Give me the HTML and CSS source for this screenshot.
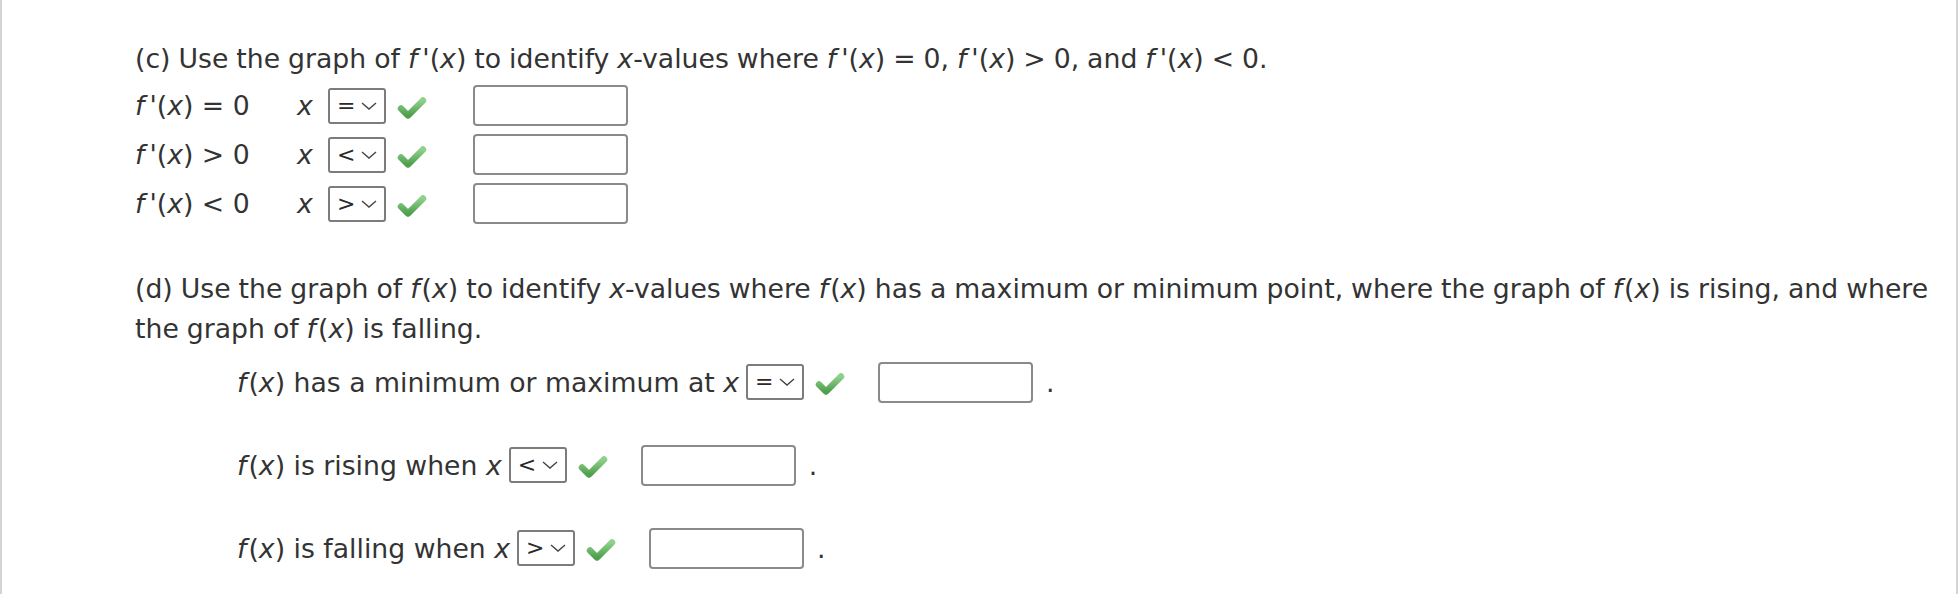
FILE: index.html
```html
<!DOCTYPE html>
<html>
<head>
<meta charset="utf-8">
<link rel="stylesheet" href="styles.css">
</head>
<body>
<svg width="0" height="0" class="defs">
  <defs>
    <linearGradient id="chk" x1="0" y1="0" x2="0" y2="1">
      <stop offset="0" stop-color="#8fd18c"/>
      <stop offset="1" stop-color="#4f9f4c"/>
    </linearGradient>
  </defs>
</svg>
<div class="page">
  <div class="content">
    <p class="question">(c) Use the graph of <i>f</i><span class="pr">'</span>(<i>x</i>) to identify <i>x</i>-values where <i>f</i><span class="pr">'</span>(<i>x</i>) = 0, <i>f</i><span class="pr">'</span>(<i>x</i>) &gt; 0, and <i>f</i><span class="pr">'</span>(<i>x</i>) &lt; 0.</p>
    <div class="grid-c">
      <span class="lbl"><i>f</i><span class="pr">'</span>(<i>x</i>) = 0</span>
      <i class="var">x</i>
      <span class="sel"><span class="sym">=</span><svg class="chev" viewBox="0 0 16 8"><path d="M1 1 L8 7 L15 1"/></svg></span>
      <svg class="check" viewBox="0 0 30 24"><path d="M4 12.5 L11 19.5 L26 4.5"/></svg>
      <span class="inp"></span>

      <span class="lbl"><i>f</i><span class="pr">'</span>(<i>x</i>) &gt; 0</span>
      <i class="var">x</i>
      <span class="sel"><span class="sym">&lt;</span><svg class="chev" viewBox="0 0 16 8"><path d="M1 1 L8 7 L15 1"/></svg></span>
      <svg class="check" viewBox="0 0 30 24"><path d="M4 12.5 L11 19.5 L26 4.5"/></svg>
      <span class="inp"></span>

      <span class="lbl"><i>f</i><span class="pr">'</span>(<i>x</i>) &lt; 0</span>
      <i class="var">x</i>
      <span class="sel"><span class="sym">&gt;</span><svg class="chev" viewBox="0 0 16 8"><path d="M1 1 L8 7 L15 1"/></svg></span>
      <svg class="check" viewBox="0 0 30 24"><path d="M4 12.5 L11 19.5 L26 4.5"/></svg>
      <span class="inp"></span>
    </div>

    <p class="question q-d">(d) Use the graph of <i class="fn">f</i>(<i>x</i>) to identify <i>x</i>-values where <i class="fn">f</i>(<i>x</i>) has a maximum or minimum point, where the graph of <i class="fn">f</i>(<i>x</i>) is rising, and where the graph of <i class="fn">f</i>(<i>x</i>) is falling.</p>

    <div class="rows-d">
      <div class="row-d">
        <span class="txt"><i class="fn">f</i>(<i>x</i>) has a minimum or maximum at <i>x</i></span>
        <span class="sel"><span class="sym">=</span><svg class="chev" viewBox="0 0 16 8"><path d="M1 1 L8 7 L15 1"/></svg></span>
        <svg class="check" viewBox="0 0 30 24"><path d="M4 12.5 L11 19.5 L26 4.5"/></svg>
        <span class="inp"></span>
        <span class="dot">.</span>
      </div>
      <div class="row-d">
        <span class="txt"><i class="fn">f</i>(<i>x</i>) is rising when <i>x</i></span>
        <span class="sel"><span class="sym">&lt;</span><svg class="chev" viewBox="0 0 16 8"><path d="M1 1 L8 7 L15 1"/></svg></span>
        <svg class="check" viewBox="0 0 30 24"><path d="M4 12.5 L11 19.5 L26 4.5"/></svg>
        <span class="inp"></span>
        <span class="dot">.</span>
      </div>
      <div class="row-d">
        <span class="txt"><i class="fn">f</i>(<i>x</i>) is falling when <i>x</i></span>
        <span class="sel"><span class="sym">&gt;</span><svg class="chev" viewBox="0 0 16 8"><path d="M1 1 L8 7 L15 1"/></svg></span>
        <svg class="check" viewBox="0 0 30 24"><path d="M4 12.5 L11 19.5 L26 4.5"/></svg>
        <span class="inp"></span>
        <span class="dot">.</span>
      </div>
    </div>
  </div>
</div>
</body>
</html>
```

FILE: styles.css
```css
html, body {
  margin: 0;
  padding: 0;
  background: #ffffff;
}
.defs {
  position: absolute;
}
.page {
  width: 1954px;
  height: 594px;
  border-left: 2px solid #d4d4d4;
  border-right: 2px solid #d4d4d4;
  overflow: hidden;
  font-family: "DejaVu Sans", Verdana, sans-serif;
  font-size: 26.7px;
  color: #333333;
}
.content {
  padding: 44px 0 0 133px;
  width: 1808px;
}
.question {
  margin: 0;
  line-height: 30px;
  word-spacing: -0.5px;
}
.pr {
  font-style: normal;
  margin-left: 5px;
}
.fn {
  margin-right: 2px;
}
.grid-c {
  margin-top: 7px;
  display: grid;
  grid-template-columns: 161px 32px 58px 87px 155px;
  grid-auto-rows: 49px;
  align-items: center;
  justify-items: start;
}
.lbl {
  white-space: nowrap;
}
.var {
  padding-left: 1px;
}
.sel {
  box-sizing: border-box;
  height: 36px;
  width: 58px;
  border: 2px solid #7c7c7c;
  border-radius: 3px;
  display: flex;
  align-items: center;
  padding-left: 7px;
  gap: 8px;
  font-size: 22px;
  color: #2a2a2a;
}
.sym {
  width: 16px;
  line-height: 1;
}
.chev {
  width: 16px;
  height: 8px;
}
.chev path {
  fill: none;
  stroke: #444;
  stroke-width: 1.4;
}
.check {
  width: 30px;
  height: 24px;
  margin-left: 11px;
  margin-top: 4px;
}
.check path {
  fill: none;
  stroke: url(#chk);
  stroke-width: 6.5;
  stroke-linecap: round;
  stroke-linejoin: round;
}
.inp {
  box-sizing: border-box;
  width: 155px;
  height: 41px;
  border: 2px solid #8a8a8a;
  border-radius: 4px;
}
.q-d {
  margin-top: 41px;
  line-height: 40px;
}
.rows-d {
  margin-top: 12px;
  padding-left: 102px;
  display: flex;
  flex-direction: column;
  gap: 41px;
}
.row-d {
  height: 42px;
  display: flex;
  align-items: center;
}
.row-d .txt {
  margin-right: 7px;
}
.row-d .check {
  margin-right: 33px;
}
.row-d .dot {
  margin-left: 13px;
}
```
